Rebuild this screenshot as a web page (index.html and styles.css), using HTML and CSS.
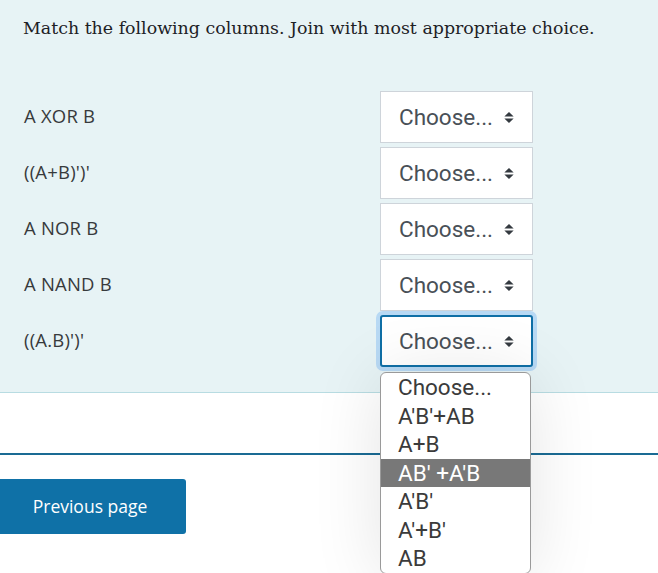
FILE: index.html
```html
<!DOCTYPE html>
<html lang="en">
<head>
<meta charset="UTF-8">
<title>Match question</title>
<link rel="stylesheet" href="styles.css">
</head>
<body>
<div class="que">
  <p class="qtext">Match the following columns. Join with most appropriate choice.</p>
  <div class="answer">
    <div class="row"><span class="label">A XOR B</span><div class="select"><span>Choose...</span><svg class="caret" viewBox="0 0 12 14" width="12" height="13"><path d="M6 1 L11 6 H1 Z M1 8 H11 L6 13 Z" fill="#343a40"/></svg></div></div>
    <div class="row"><span class="label">((A+B)')'</span><div class="select"><span>Choose...</span><svg class="caret" viewBox="0 0 12 14" width="12" height="13"><path d="M6 1 L11 6 H1 Z M1 8 H11 L6 13 Z" fill="#343a40"/></svg></div></div>
    <div class="row"><span class="label">A NOR B</span><div class="select"><span>Choose...</span><svg class="caret" viewBox="0 0 12 14" width="12" height="13"><path d="M6 1 L11 6 H1 Z M1 8 H11 L6 13 Z" fill="#343a40"/></svg></div></div>
    <div class="row"><span class="label">A NAND B</span><div class="select"><span>Choose...</span><svg class="caret" viewBox="0 0 12 14" width="12" height="13"><path d="M6 1 L11 6 H1 Z M1 8 H11 L6 13 Z" fill="#343a40"/></svg></div></div>
    <div class="row"><span class="label">((A.B)')'</span>
      <div class="select open"><span>Choose...</span><svg class="caret" viewBox="0 0 12 14" width="12" height="13"><path d="M6 1 L11 6 H1 Z M1 8 H11 L6 13 Z" fill="#343a40"/></svg>
        <ul class="dropdown">
          <li>Choose...</li>
          <li>A'B'+AB</li>
          <li>A+B</li>
          <li class="hover">AB' +A'B</li>
          <li>A'B'</li>
          <li>A'+B'</li>
          <li>AB</li>
        </ul>
      </div>
    </div>
  </div>
</div>
<div class="spacer"></div>
<div class="nav">
  <button type="button" class="prev">Previous page</button>
</div>
</body>
</html>
```

FILE: styles.css
```css
html, body { margin:0; padding:0; overflow:hidden; }
body { background:#fff; height:573px; color:#373a3c; font-family:"Open Sans", "Noto Sans", sans-serif; }
.que { background:#e7f3f5; border-bottom:1px solid #b8dce2; padding:15px 0 25px 0; }
.qtext { margin:0 0 0 23px; font-family:"DejaVu Serif", serif; font-size:17.4px; line-height:26px; color:#1d2125; }
.answer { display:flex; flex-direction:column; gap:4px; margin-top:50px; }
.row { display:grid; grid-template-columns:380px 153px; align-items:center; height:52px; }
.label { padding-left:24px; font-size:18.5px; letter-spacing:0.2px; color:#373a3c; margin-top:-4px; }
.select { position:relative; box-sizing:border-box; height:52px; border:1px solid #ced4da; background:#fff; display:flex; align-items:center; padding-left:18px; font-family:Roboto, sans-serif; font-size:22.5px; color:#495057; }
.select span { flex:1; }
.caret { margin-right:17px; }
.select.open { border:2px solid #0f6fa6; border-radius:3px; padding-left:17px; box-shadow:0 0 0 4px #b8d9f4; }
.select.open .caret { margin-right:16px; }
.dropdown { position:absolute; left:-2px; top:55px; width:151px; box-sizing:border-box; margin:0; padding:0; list-style:none; background:#fff; border:1px solid #9a9a9a; border-radius:6px; overflow:hidden; box-shadow:0 4px 70px rgba(0,0,0,0.11); z-index:2; }
.dropdown li { height:28.5px; line-height:28.5px; padding-left:17px; font-size:22.5px; color:#3b3b3b; }
.dropdown li.hover { background:#787878; color:#fff; }
.spacer { height:60px; border-bottom:2px solid #1a6b94; }
.nav { padding-top:24px; }
.prev { width:186px; height:55px; border:none; border-radius:0 3px 3px 0; background:#0f71a7; color:#fff; font-family:"Open Sans", "Noto Sans", sans-serif; font-size:17.5px; padding:0 6px 2px 0; }
```
